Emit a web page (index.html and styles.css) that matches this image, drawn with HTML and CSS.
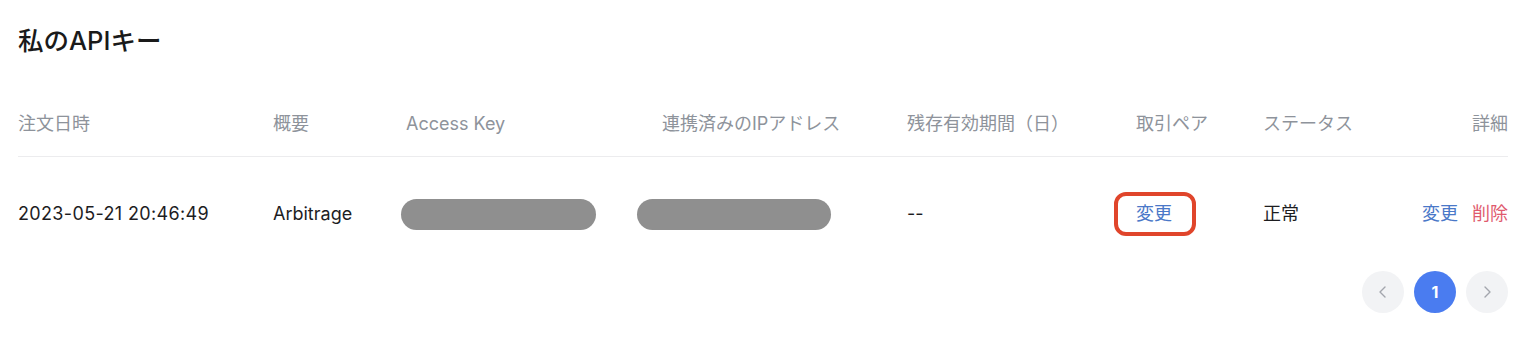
FILE: index.html
```html
<!DOCTYPE html>
<html lang="ja">
<head>
<meta charset="utf-8">
<link rel="stylesheet" href="styles.css">
</head>
<body>
<div class="page">
  <h1 class="title">私のAPIキー</h1>
  <div class="table">
    <div class="row head">
      <div class="cell">注文日時</div>
      <div class="cell">概要</div>
      <div class="cell">Access Key</div>
      <div class="cell">連携済みのIPアドレス</div>
      <div class="cell">残存有効期間（日）</div>
      <div class="cell">取引ペア</div>
      <div class="cell">ステータス</div>
      <div class="cell right">詳細</div>
    </div>
    <div class="row body">
      <div class="cell num">2023-05-21 20:46:49</div>
      <div class="cell">Arbitrage</div>
      <div class="cell"><span class="mask mask-key"></span></div>
      <div class="cell"><span class="mask mask-ip"></span></div>
      <div class="cell">--</div>
      <div class="cell"><span class="highlight"><a class="link">変更</a></span></div>
      <div class="cell">正常</div>
      <div class="cell right"><a class="link">変更</a><a class="link danger">削除</a></div>
    </div>
  </div>
  <div class="pager">
    <button class="pg">
      <svg width="14" height="14" viewBox="0 0 14 14"><path d="M9 2 L4 7 L9 12" fill="none" stroke="#a3a6ad" stroke-width="1.4" stroke-linecap="round" stroke-linejoin="round"/></svg>
    </button>
    <button class="pg active">1</button>
    <button class="pg">
      <svg width="14" height="14" viewBox="0 0 14 14"><path d="M5 2 L10 7 L5 12" fill="none" stroke="#a3a6ad" stroke-width="1.4" stroke-linecap="round" stroke-linejoin="round"/></svg>
    </button>
  </div>
</div>
</body>
</html>
```
FILE: styles.css
```css
* { box-sizing: border-box; }
html, body { margin: 0; padding: 0; background: #fff; }
body {
  font-family: Inter, "Noto Sans CJK JP", "Noto Sans", sans-serif;
  color: #1d1d1f;
}
.page {
  padding: 24px 28px 0 18px;
}
.title {
  margin: 0;
  font-size: 25.5px;
  line-height: 34px;
  font-weight: 500;
  color: #1a1a1a;
}
.table {
  margin-top: 54px;
}
.row {
  display: grid;
  grid-template-columns: 255px 133px 256px 245px 229px 127px 120px 1fr;
  align-items: center;
}
.cell {
  font-size: 18px;
  line-height: 24px;
  white-space: nowrap;
}
.right { text-align: right; }
.head {
  padding-bottom: 20px;
  border-bottom: 1px solid #ececee;
}
.head .cell {
  color: #8e939b;
}
.body {
  height: 114px;
}
.body .cell { color: #1d1d1f; }
.num { letter-spacing: 0.35px; }
.mask {
  display: inline-block;
  height: 31px;
  width: 195px;
  border-radius: 16px;
  background: #8f8f8f;
  vertical-align: middle;
}
.mask-key { margin-left: -5px; }
.mask-ip { margin-left: -25px; width: 194px; }
.link {
  color: #4a78c8;
  cursor: pointer;
}
.link + .link { margin-left: 14px; }
.danger { color: #e05a6e; }
.highlight {
  display: inline-block;
  margin: -10px 0 -10px -22px;
  padding: 6px 20px 6px 18px;
  border: 4px solid #e0452b;
  border-radius: 12px;
}
.pager {
  display: flex;
  justify-content: flex-end;
  gap: 10px;
  margin-top: 0;
  padding-right: 0;
}
.pg {
  width: 42px;
  height: 42px;
  border-radius: 50%;
  border: none;
  background: #f2f3f5;
  display: flex;
  align-items: center;
  justify-content: center;
  font-family: Inter, "Noto Sans", sans-serif;
  font-size: 16px;
  font-weight: 700;
  color: #fff;
  padding: 0;
}
.pg.active { background: #4a7cf0; }
```
